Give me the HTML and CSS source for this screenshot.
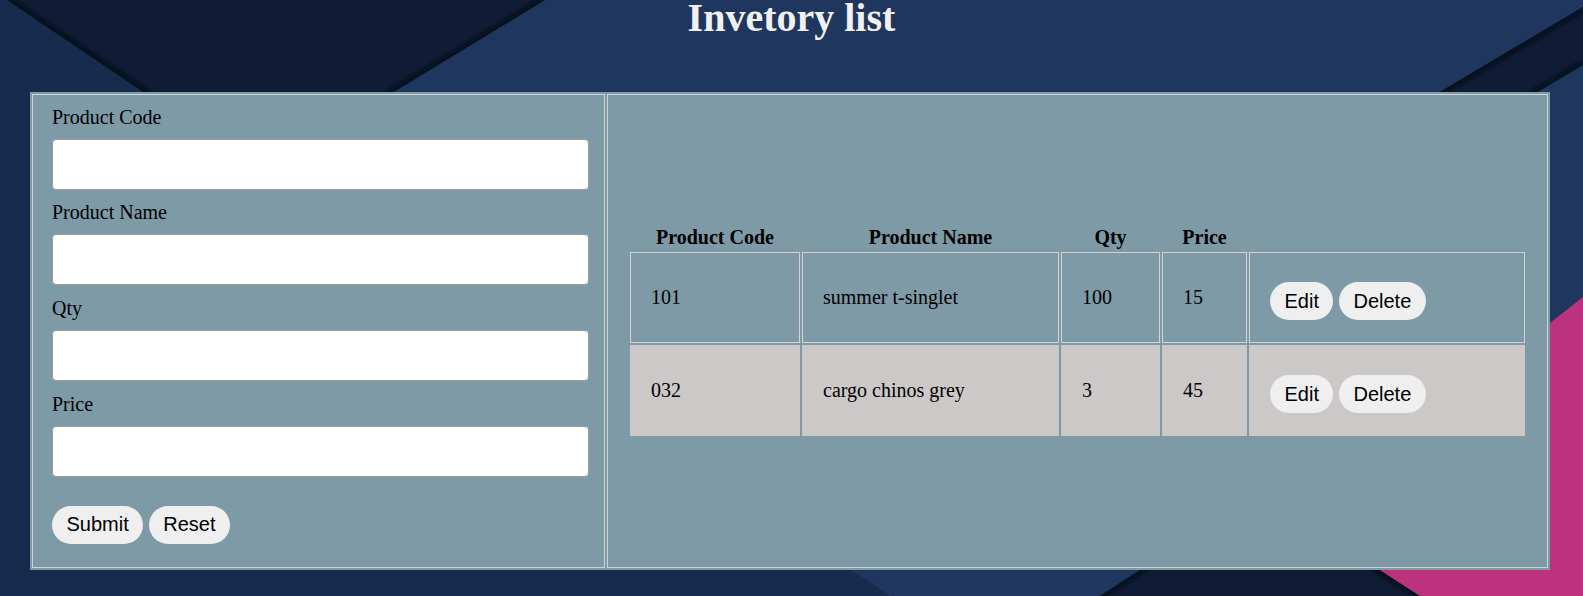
FILE: index.html
```html
<!DOCTYPE html>
<html lang="en">

<head>
    <meta charset="UTF-8">
    <meta name="viewport" content="width=device-width, initial-scale=1.0">
    <title>Invetory list</title>
    <link rel="stylesheet" href="styles.css">
</head>

<body>
    <h1 class="title">Invetory list</h1>
    <table class="layout">
        <tr>
            <td class="form-cell">
                <form class="product-form" autocomplete="off">
                    <div class="field">
                        <label for="productCode">Product Code</label>
                        <input type="text" id="productCode">
                    </div>
                    <div class="field">
                        <label for="productName">Product Name</label>
                        <input type="text" id="productName">
                    </div>
                    <div class="field">
                        <label for="qty">Qty</label>
                        <input type="text" id="qty">
                    </div>
                    <div class="field">
                        <label for="price">Price</label>
                        <input type="text" id="price">
                    </div>
                    <div class="btn-row form-btns">
                        <button type="submit">Submit</button>
                        <button type="reset">Reset</button>
                    </div>
                </form>
            </td>
            <td class="list-cell">
                <table class="list">
                    <thead>
                        <tr>
                            <th class="col-code">Product Code</th>
                            <th class="col-name">Product Name</th>
                            <th class="col-qty">Qty</th>
                            <th class="col-price">Price</th>
                            <th></th>
                        </tr>
                    </thead>
                    <tbody>
                        <tr>
                            <td>101</td>
                            <td>summer t-singlet</td>
                            <td>100</td>
                            <td>15</td>
                            <td class="actions">
                                <div class="btn-row">
                                    <button>Edit</button>
                                    <button>Delete</button>
                                </div>
                            </td>
                        </tr>
                        <tr>
                            <td>032</td>
                            <td>cargo chinos grey</td>
                            <td>3</td>
                            <td>45</td>
                            <td class="actions">
                                <div class="btn-row">
                                    <button>Edit</button>
                                    <button>Delete</button>
                                </div>
                            </td>
                        </tr>
                    </tbody>
                </table>
            </td>
        </tr>
    </table>
</body>

</html>
```

FILE: styles.css
```css
html {
    height: 100%;
    background: #1f365e url("data:image/svg+xml,<svg xmlns='http://www.w3.org/2000/svg' viewBox='0 0 1583 596' preserveAspectRatio='none'><defs><filter id='b' x='-20%' y='-20%' width='140%' height='140%'><feGaussianBlur stdDeviation='2.5'/></filter><clipPath id='v'><polygon points='7,0 545,0 262,172'/></clipPath><clipPath id='k'><polygon points='1583,7 1583,65 1393,178 1295,178'/></clipPath><clipPath id='w'><polygon points='1260,492 1100,596 1420,596'/></clipPath></defs><rect width='1583' height='596' fill='%231f365e'/><polygon points='0,0 7,0 890,596 0,596' fill='%23172c4c'/><polygon points='7,0 545,0 262,172' fill='%23101c35'/><g clip-path='url(%23v)'><polyline points='7,0 262,172 545,0' fill='none' stroke='%23050a15' stroke-width='7' filter='url(%23b)'/></g><polygon points='1583,7 1583,65 1393,178 1295,178' fill='%23101c35'/><g clip-path='url(%23k)'><polyline points='1583,7 1295,178' fill='none' stroke='%23050a15' stroke-width='7' filter='url(%23b)'/><polyline points='1583,65 1393,178' fill='none' stroke='%23050a15' stroke-width='7' filter='url(%23b)'/></g><polygon points='1260,492 1100,596 1420,596' fill='%23101c35'/><g clip-path='url(%23w)'><polyline points='1100,596 1260,492 1420,596' fill='none' stroke='%23050a15' stroke-width='7' filter='url(%23b)'/></g><polygon points='1583,297 1301,519 1420,596 1583,596' fill='%23bd327e'/></svg>") no-repeat 0 0 / 100% 100%;
}

body {
    margin: 0;
    font-family: "Liberation Serif", "Times New Roman", serif;
    font-size: 20px;
    color: #000;
}

.title {
    margin: 0;
    font-size: 40px;
    line-height: 36px;
    text-align: center;
    color: #f1f1f1;
}

/* 바깥 레이아웃 테이블 */
.layout {
    width: 1520px;
    margin: 56px 0 0 30px;
    border-spacing: 2px;
    table-layout: fixed;
    background: #7e9aa7;
}

.layout > tbody > tr > td {
    box-sizing: border-box;
    border: 1px solid #cfd4d6;
}

.form-cell {
    width: 573px;
    padding: 10.5px 15px 23px 19px;
    vertical-align: top;
}

.list-cell {
    padding: 0 20px;
    vertical-align: middle;
}

.field {
    margin-bottom: 11.7px;
}

.field label {
    display: block;
    line-height: 23px;
    margin-bottom: 10px;
}

.field input {
    display: block;
    box-sizing: border-box;
    width: 100%;
    height: 51px;
    border: 1px solid #9a9a9a;
    border-radius: 4px;
    background: #fff;
    font-size: 18px;
}

.btn-row {
    display: flex;
    gap: 5.5px;
}

/* 위 .field 마진과 겹치므로 전체 간격을 그대로 준다 */
.form-btns {
    margin-top: 29.4px;
}

button {
    height: 38px;
    padding: 0 14.5px;
    border: none;
    border-radius: 19px;
    background: #efefef;
    color: #000;
    font-family: "Liberation Sans", Arial, sans-serif;
    font-size: 20px;
}

/* 상품 목록 */
.list {
    width: 100%;
    border-spacing: 2px;
    table-layout: fixed;
}

.list th {
    box-sizing: border-box;
    padding: 1px;
    line-height: 23px;
    font-weight: bold;
    text-align: center;
}

.col-code { width: 170px; }
.col-name { width: 257px; }
.col-qty { width: 99px; }
.col-price { width: 85px; }

.list td {
    border: 1px solid #d3d3d3;
    padding: 20px;
    line-height: 23px;
    vertical-align: middle;
}

.list td.actions {
    padding: 29px 20px 22px;
}

.list tbody tr:nth-child(even) td {
    background: #ccc8c7;
    border-color: #ccc8c7;
}
```
